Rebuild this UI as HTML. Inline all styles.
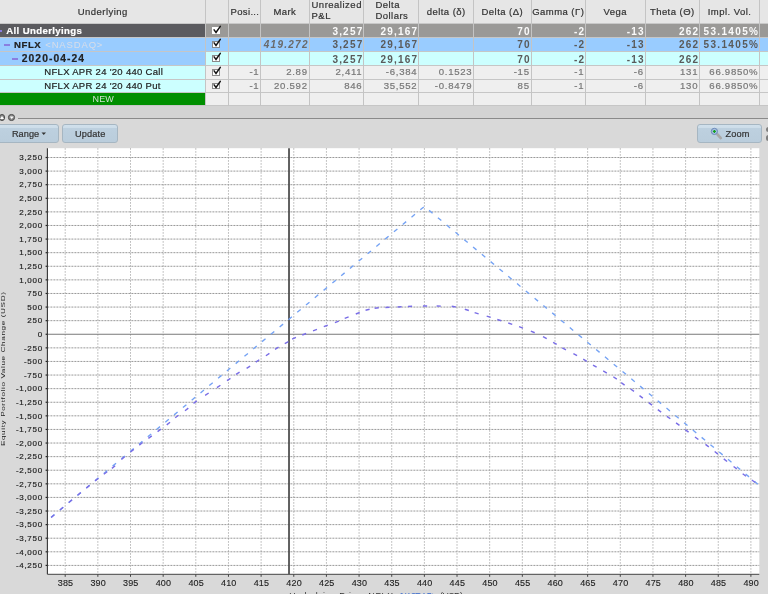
<!DOCTYPE html><html><head><meta charset="utf-8"><style>
*{margin:0;padding:0;box-sizing:border-box}
html,body{width:768px;height:594px;overflow:hidden;background:#d9d9d9;font-family:"Liberation Sans",sans-serif}
.a{position:absolute}
.t{position:absolute;white-space:nowrap;font-size:10px;-webkit-text-stroke:0.2px currentColor}
.b{font-weight:bold;font-size:10.5px}
</style></head><body><div style="position:absolute;left:0;top:0;width:768px;height:594px;will-change:transform"><div class="a" style="left:0;top:0;width:768px;height:23.7px;background:#e6e6e6"></div><div class="a" style="left:0;top:23.7px;width:205.5px;height:13.5px;background:#5b5b5f"></div><div class="a" style="left:205.5px;top:23.7px;width:562.5px;height:13.5px;background:#9a9997"></div><div class="a" style="left:0;top:37.2px;width:205.5px;height:14.1px;background:#99ccff"></div><div class="a" style="left:205.5px;top:37.2px;width:562.5px;height:14.1px;background:#99ccff"></div><div class="a" style="left:0;top:51.3px;width:205.5px;height:13.9px;background:#99ccff"></div><div class="a" style="left:205.5px;top:51.3px;width:562.5px;height:13.9px;background:#ccffff"></div><div class="a" style="left:0;top:65.2px;width:205.5px;height:14.0px;background:#ccffff"></div><div class="a" style="left:205.5px;top:65.2px;width:562.5px;height:14.0px;background:#efefef"></div><div class="a" style="left:0;top:79.2px;width:205.5px;height:13.7px;background:#ccffff"></div><div class="a" style="left:205.5px;top:79.2px;width:562.5px;height:13.7px;background:#efefef"></div><div class="a" style="left:0;top:92.9px;width:205.5px;height:13.0px;background:#008f00"></div><div class="a" style="left:205.5px;top:92.9px;width:562.5px;height:13.0px;background:#efefef"></div><div class="a" style="left:0;top:36.7px;width:768px;height:1px;background:#c6c6c6"></div><div class="a" style="left:0;top:50.8px;width:768px;height:1px;background:#c6c6c6"></div><div class="a" style="left:0;top:64.7px;width:768px;height:1px;background:#c6c6c6"></div><div class="a" style="left:0;top:78.7px;width:768px;height:1px;background:#c6c6c6"></div><div class="a" style="left:0;top:92.4px;width:768px;height:1px;background:#c6c6c6"></div><div class="a" style="left:0;top:105.4px;width:768px;height:1px;background:#c6c6c6"></div><div class="a" style="left:0;top:23.2px;width:768px;height:1px;background:#c8c8c8"></div><div class="a" style="left:205.0px;top:0;width:1px;height:106px;background:#c4c4c4"></div><div class="a" style="left:228.0px;top:0;width:1px;height:106px;background:#c4c4c4"></div><div class="a" style="left:260.2px;top:0;width:1px;height:106px;background:#c4c4c4"></div><div class="a" style="left:308.5px;top:0;width:1px;height:106px;background:#c4c4c4"></div><div class="a" style="left:363.2px;top:0;width:1px;height:106px;background:#c4c4c4"></div><div class="a" style="left:418.1px;top:0;width:1px;height:106px;background:#c4c4c4"></div><div class="a" style="left:473.2px;top:0;width:1px;height:106px;background:#c4c4c4"></div><div class="a" style="left:530.5px;top:0;width:1px;height:106px;background:#c4c4c4"></div><div class="a" style="left:585.0px;top:0;width:1px;height:106px;background:#c4c4c4"></div><div class="a" style="left:644.5px;top:0;width:1px;height:106px;background:#c4c4c4"></div><div class="a" style="left:699.0px;top:0;width:1px;height:106px;background:#c4c4c4"></div><div class="a" style="left:759.1px;top:0;width:1px;height:106px;background:#c4c4c4"></div><div class="t" style="left:0px;top:4.6px;width:205.5px;height:14px;line-height:14px;text-align:center;color:#333;font-size:9.5px;letter-spacing:0.45px">Underlying</div><div class="t" style="left:260.7px;top:4.6px;width:48.30000000000001px;height:14px;line-height:14px;text-align:center;color:#333;font-size:9.5px;letter-spacing:0.45px">Mark</div><div class="t" style="left:418.6px;top:4.6px;width:55.099999999999966px;height:14px;line-height:14px;text-align:center;color:#333;font-size:9.5px;letter-spacing:0.45px">delta (δ)</div><div class="t" style="left:473.7px;top:4.6px;width:57.30000000000001px;height:14px;line-height:14px;text-align:center;color:#333;font-size:9.5px;letter-spacing:0.45px">Delta (Δ)</div><div class="t" style="left:531px;top:4.6px;width:54.5px;height:14px;line-height:14px;text-align:center;color:#333;font-size:9.5px;letter-spacing:0.45px">Gamma (Γ)</div><div class="t" style="left:585.5px;top:4.6px;width:59.5px;height:14px;line-height:14px;text-align:center;color:#333;font-size:9.5px;letter-spacing:0.45px">Vega</div><div class="t" style="left:645px;top:4.6px;width:54.5px;height:14px;line-height:14px;text-align:center;color:#333;font-size:9.5px;letter-spacing:0.45px">Theta (Θ)</div><div class="t" style="left:699.5px;top:4.6px;width:60.10000000000002px;height:14px;line-height:14px;text-align:center;color:#333;font-size:9.5px;letter-spacing:0.45px">Impl. Vol.</div><div class="t" style="left:230.5px;top:4.6px;height:14px;line-height:14px;color:#333;font-size:9.5px;letter-spacing:0.35px">Posi...</div><div class="t" style="left:311.5px;top:-1.5px;line-height:11.5px;color:#333;font-size:9.5px;letter-spacing:0.5px">Unrealized<br>P&amp;L</div><div class="t" style="left:375.5px;top:-1.5px;line-height:11.5px;color:#333;font-size:9.5px;letter-spacing:0.45px">Delta<br>Dollars</div><div class="t" style="left:6.2px;top:23.7px;height:13.5px;line-height:13.5px;color:#fff;font-weight:bold;font-size:9.6px;letter-spacing:0.38px;padding-top:0px">All Underlyings</div><div class="t" style="left:14px;top:37.2px;height:14.1px;line-height:14.1px;color:#222;font-weight:bold;font-size:9.6px;letter-spacing:0.55px;padding-top:1px">NFLX<span style="color:#d8dde8;-webkit-text-stroke:0;font-weight:normal;font-size:9.5px;letter-spacing:0.85px;margin-left:4px">&lt;NASDAQ&gt;</span></div><div class="t" style="left:21.8px;top:51.3px;height:13.9px;line-height:13.9px;color:#222;font-weight:bold;font-size:10.3px;letter-spacing:1.05px;padding-top:0.8px">2020-04-24</div><div class="t" style="left:44.3px;top:65.2px;height:14.0px;line-height:14.0px;color:#222;font-size:9.5px;letter-spacing:0.3px;padding-top:0.3px">NFLX APR 24 '20 440 Call</div><div class="t" style="left:44.3px;top:79.2px;height:13.7px;line-height:13.7px;color:#222;font-size:9.5px;letter-spacing:0.3px;padding-top:0.3px">NFLX APR 24 '20 440 Put</div><div class="t" style="left:0;top:93px;width:205.5px;height:13px;line-height:13px;text-align:center;color:#cfe3cf;-webkit-text-stroke:0;font-size:9px;letter-spacing:0.2px;padding-left:1px">NEW</div><div class="a" style="left:0;top:30.2px;width:2.2px;height:1.6px;background:#8a7ee0"></div><div class="a" style="left:4px;top:43.9px;width:6px;height:1.8px;background:#8a7ee0"></div><div class="a" style="left:12px;top:57.9px;width:6px;height:1.8px;background:#8a7ee0"></div><div class="a" style="left:212.3px;top:27.2px;width:7.3px;height:6.7px;background:#fff;border:none"></div><svg class="a" style="left:205px;top:20.5px" width="20" height="20" viewBox="0 0 20 20"><path d="M9.1 8.9 L11 11.4 L15.3 5.35" stroke="#111" stroke-width="1.5" fill="none" stroke-linecap="round"/></svg><div class="a" style="left:212.3px;top:41.0px;width:7.3px;height:6.7px;background:#fff;border:1px solid #8a8a8a"></div><svg class="a" style="left:205px;top:34.2px" width="20" height="20" viewBox="0 0 20 20"><path d="M9.1 8.9 L11 11.4 L15.3 5.35" stroke="#111" stroke-width="1.5" fill="none" stroke-linecap="round"/></svg><div class="a" style="left:212.3px;top:55.0px;width:7.3px;height:6.7px;background:#fff;border:1px solid #8a8a8a"></div><svg class="a" style="left:205px;top:48.2px" width="20" height="20" viewBox="0 0 20 20"><path d="M9.1 8.9 L11 11.4 L15.3 5.35" stroke="#111" stroke-width="1.5" fill="none" stroke-linecap="round"/></svg><div class="a" style="left:212.3px;top:68.9px;width:7.3px;height:6.7px;background:#fff;border:1px solid #8a8a8a"></div><svg class="a" style="left:205px;top:62.2px" width="20" height="20" viewBox="0 0 20 20"><path d="M9.1 8.9 L11 11.4 L15.3 5.35" stroke="#111" stroke-width="1.5" fill="none" stroke-linecap="round"/></svg><div class="a" style="left:212.3px;top:82.8px;width:7.3px;height:6.7px;background:#fff;border:1px solid #8a8a8a"></div><svg class="a" style="left:205px;top:76.1px" width="20" height="20" viewBox="0 0 20 20"><path d="M9.1 8.9 L11 11.4 L15.3 5.35" stroke="#111" stroke-width="1.5" fill="none" stroke-linecap="round"/></svg><div class="t" style="right:404.6px;top:24.9px;height:13.5px;line-height:13.5px;color:#fafafa;letter-spacing:1.2px;font-weight:bold;font-size:10px;-webkit-text-stroke:0">3,257</div><div class="t" style="right:349.7px;top:24.9px;height:13.5px;line-height:13.5px;color:#fafafa;letter-spacing:1.2px;font-weight:bold;font-size:10px;-webkit-text-stroke:0">29,167</div><div class="t" style="right:237.3px;top:24.9px;height:13.5px;line-height:13.5px;color:#fafafa;letter-spacing:1.2px;font-weight:bold;font-size:10px;-webkit-text-stroke:0">70</div><div class="t" style="right:182.8px;top:24.9px;height:13.5px;line-height:13.5px;color:#fafafa;letter-spacing:1.2px;font-weight:bold;font-size:10px;-webkit-text-stroke:0">-2</div><div class="t" style="right:123.3px;top:24.9px;height:13.5px;line-height:13.5px;color:#fafafa;letter-spacing:1.2px;font-weight:bold;font-size:10px;-webkit-text-stroke:0">-13</div><div class="t" style="right:68.8px;top:24.9px;height:13.5px;line-height:13.5px;color:#fafafa;letter-spacing:1.2px;font-weight:bold;font-size:10px;-webkit-text-stroke:0">262</div><div class="t" style="right:404.6px;top:38.4px;height:14.1px;line-height:14.1px;color:#5a5a5a;letter-spacing:1.2px;font-weight:bold;font-size:10px;-webkit-text-stroke:0">3,257</div><div class="t" style="right:349.7px;top:38.4px;height:14.1px;line-height:14.1px;color:#5a5a5a;letter-spacing:1.2px;font-weight:bold;font-size:10px;-webkit-text-stroke:0">29,167</div><div class="t" style="right:237.3px;top:38.4px;height:14.1px;line-height:14.1px;color:#5a5a5a;letter-spacing:1.2px;font-weight:bold;font-size:10px;-webkit-text-stroke:0">70</div><div class="t" style="right:182.8px;top:38.4px;height:14.1px;line-height:14.1px;color:#5a5a5a;letter-spacing:1.2px;font-weight:bold;font-size:10px;-webkit-text-stroke:0">-2</div><div class="t" style="right:123.3px;top:38.4px;height:14.1px;line-height:14.1px;color:#5a5a5a;letter-spacing:1.2px;font-weight:bold;font-size:10px;-webkit-text-stroke:0">-13</div><div class="t" style="right:68.8px;top:38.4px;height:14.1px;line-height:14.1px;color:#5a5a5a;letter-spacing:1.2px;font-weight:bold;font-size:10px;-webkit-text-stroke:0">262</div><div class="t" style="right:404.6px;top:52.5px;height:13.9px;line-height:13.9px;color:#5a5a5a;letter-spacing:1.2px;font-weight:bold;font-size:10px;-webkit-text-stroke:0">3,257</div><div class="t" style="right:349.7px;top:52.5px;height:13.9px;line-height:13.9px;color:#5a5a5a;letter-spacing:1.2px;font-weight:bold;font-size:10px;-webkit-text-stroke:0">29,167</div><div class="t" style="right:237.3px;top:52.5px;height:13.9px;line-height:13.9px;color:#5a5a5a;letter-spacing:1.2px;font-weight:bold;font-size:10px;-webkit-text-stroke:0">70</div><div class="t" style="right:182.8px;top:52.5px;height:13.9px;line-height:13.9px;color:#5a5a5a;letter-spacing:1.2px;font-weight:bold;font-size:10px;-webkit-text-stroke:0">-2</div><div class="t" style="right:123.3px;top:52.5px;height:13.9px;line-height:13.9px;color:#5a5a5a;letter-spacing:1.2px;font-weight:bold;font-size:10px;-webkit-text-stroke:0">-13</div><div class="t" style="right:68.8px;top:52.5px;height:13.9px;line-height:13.9px;color:#5a5a5a;letter-spacing:1.2px;font-weight:bold;font-size:10px;-webkit-text-stroke:0">262</div><div class="t" style="right:8.7px;top:24.9px;height:13.5px;line-height:13.5px;color:#fafafa;letter-spacing:1.35px;font-weight:bold;font-size:10px;-webkit-text-stroke:0">53.1405%</div><div class="t" style="right:8.7px;top:38.4px;height:14.1px;line-height:14.1px;color:#5a5a5a;letter-spacing:1.35px;font-weight:bold;font-size:10px;-webkit-text-stroke:0">53.1405%</div><div class="t" style="right:459.3px;top:38.4px;height:14.1px;line-height:14.1px;color:#6a6a6a;letter-spacing:1.25px;font-weight:bold;font-size:10px;-webkit-text-stroke:0;font-style:italic">419.272</div><div class="t" style="right:508.6px;top:65.3px;height:14.0px;line-height:14.0px;color:#777;letter-spacing:0.72px;font-size:9.6px">-1</div><div class="t" style="right:460.3px;top:65.3px;height:14.0px;line-height:14.0px;color:#777;letter-spacing:0.72px;font-size:9.6px">2.89</div><div class="t" style="right:405.6px;top:65.3px;height:14.0px;line-height:14.0px;color:#777;letter-spacing:0.72px;font-size:9.6px">2,411</div><div class="t" style="right:350.7px;top:65.3px;height:14.0px;line-height:14.0px;color:#777;letter-spacing:0.72px;font-size:9.6px">-6,384</div><div class="t" style="right:295.6px;top:65.3px;height:14.0px;line-height:14.0px;color:#777;letter-spacing:0.72px;font-size:9.6px">0.1523</div><div class="t" style="right:238.3px;top:65.3px;height:14.0px;line-height:14.0px;color:#777;letter-spacing:0.72px;font-size:9.6px">-15</div><div class="t" style="right:183.8px;top:65.3px;height:14.0px;line-height:14.0px;color:#777;letter-spacing:0.72px;font-size:9.6px">-1</div><div class="t" style="right:124.3px;top:65.3px;height:14.0px;line-height:14.0px;color:#777;letter-spacing:0.72px;font-size:9.6px">-6</div><div class="t" style="right:69.8px;top:65.3px;height:14.0px;line-height:14.0px;color:#777;letter-spacing:0.72px;font-size:9.6px">131</div><div class="t" style="right:9.7px;top:65.3px;height:14.0px;line-height:14.0px;color:#777;letter-spacing:0.72px;font-size:9.6px">66.9850%</div><div class="t" style="right:508.6px;top:79.3px;height:13.7px;line-height:13.7px;color:#777;letter-spacing:0.72px;font-size:9.6px">-1</div><div class="t" style="right:460.3px;top:79.3px;height:13.7px;line-height:13.7px;color:#777;letter-spacing:0.72px;font-size:9.6px">20.592</div><div class="t" style="right:405.6px;top:79.3px;height:13.7px;line-height:13.7px;color:#777;letter-spacing:0.72px;font-size:9.6px">846</div><div class="t" style="right:350.7px;top:79.3px;height:13.7px;line-height:13.7px;color:#777;letter-spacing:0.72px;font-size:9.6px">35,552</div><div class="t" style="right:295.6px;top:79.3px;height:13.7px;line-height:13.7px;color:#777;letter-spacing:0.72px;font-size:9.6px">-0.8479</div><div class="t" style="right:238.3px;top:79.3px;height:13.7px;line-height:13.7px;color:#777;letter-spacing:0.72px;font-size:9.6px">85</div><div class="t" style="right:183.8px;top:79.3px;height:13.7px;line-height:13.7px;color:#777;letter-spacing:0.72px;font-size:9.6px">-1</div><div class="t" style="right:124.3px;top:79.3px;height:13.7px;line-height:13.7px;color:#777;letter-spacing:0.72px;font-size:9.6px">-6</div><div class="t" style="right:69.8px;top:79.3px;height:13.7px;line-height:13.7px;color:#777;letter-spacing:0.72px;font-size:9.6px">130</div><div class="t" style="right:9.7px;top:79.3px;height:13.7px;line-height:13.7px;color:#777;letter-spacing:0.72px;font-size:9.6px">66.9850%</div><div class="a" style="left:0;top:105.9px;width:768px;height:12.3px;background:#d3d3d3"></div><div class="a" style="left:18px;top:117.7px;width:750px;height:1.2px;background:#8a8a8a"></div><div class="a" style="left:-1.3px;top:114.1px;width:6.6px;height:6.6px;border-radius:50%;background:#8a8a8a;border:1.4px solid #4a4a4a"></div><div class="a" style="left:8.4px;top:114.1px;width:6.6px;height:6.6px;border-radius:50%;background:#8a8a8a;border:1.4px solid #4a4a4a"></div><svg class="a" style="left:0;top:112px" width="20" height="12"><path d="M0 119 L2 116 L4 119Z" transform="translate(0,-112)" fill="#fff"/><path d="M9.7 116.5 L11.7 119 L13.7 116.5Z" transform="translate(0,-112)" fill="#fff"/></svg><div class="a" style="left:765.8px;top:126.5px;width:5.5px;height:5.5px;border-radius:50%;background:#7e7e7e"></div><div class="a" style="left:765.8px;top:135.2px;width:5.5px;height:5.5px;border-radius:50%;background:#7e7e7e"></div><div class="a" style="left:-3px;top:123.6px;width:61.5px;height:19.8px;border:1px solid #a6b6c2;border-radius:3px;background:linear-gradient(#d0e0ec 0,#cddde9 2.5px,#bdd0df 3.5px,#bacddc 100%)"></div><div class="a" style="left:61.5px;top:123.6px;width:56.0px;height:19.8px;border:1px solid #a6b6c2;border-radius:3px;background:linear-gradient(#d0e0ec 0,#cddde9 2.5px,#bdd0df 3.5px,#bacddc 100%)"></div><div class="a" style="left:696.6px;top:123.6px;width:65.7px;height:19.8px;border:1px solid #a6b6c2;border-radius:3px;background:linear-gradient(#d0e0ec 0,#cddde9 2.5px,#bdd0df 3.5px,#bacddc 100%)"></div><div class="t" style="left:11.9px;top:127px;height:14px;line-height:14px;color:#333;font-size:9.2px;letter-spacing:0.05px">Range</div><svg class="a" style="left:41px;top:132px" width="6" height="4"><path d="M0.5 0.5 L5 0.5 L2.75 3Z" fill="#333"/></svg><div class="t" style="left:74.9px;top:127px;height:14px;line-height:14px;color:#333;font-size:9.2px;letter-spacing:0.15px">Update</div><div class="t" style="left:725.5px;top:127px;height:14px;line-height:14px;color:#333;font-size:9.2px;letter-spacing:0.15px">Zoom</div><svg class="a" style="left:708px;top:126px" width="16" height="16"><path d="M9.5 8.5 L12.8 12.1" stroke="#a8a8a8" stroke-width="2.6" stroke-linecap="round"/><circle cx="6.4" cy="5.4" r="3.1" fill="#a8c0e0" stroke="#6a88b8" stroke-width="1"/><path d="M6.4 3.9 V6.9 M4.9 5.4 H7.9" stroke="#10a020" stroke-width="1.3"/></svg><svg class="a" style="left:0;top:0" width="768" height="594" viewBox="0 0 768 594" font-family="Liberation Sans, sans-serif"><rect x="47.4" y="148.2" width="711.9" height="426.09999999999997" fill="#fff"/><line x1="65.20" y1="148.2" x2="65.20" y2="574.3" stroke="#b2b2b2" stroke-width="1" stroke-dasharray="1.5 1.5"/><line x1="97.85" y1="148.2" x2="97.85" y2="574.3" stroke="#b2b2b2" stroke-width="1" stroke-dasharray="1.5 1.5"/><line x1="130.50" y1="148.2" x2="130.50" y2="574.3" stroke="#b2b2b2" stroke-width="1" stroke-dasharray="1.5 1.5"/><line x1="163.16" y1="148.2" x2="163.16" y2="574.3" stroke="#b2b2b2" stroke-width="1" stroke-dasharray="1.5 1.5"/><line x1="195.81" y1="148.2" x2="195.81" y2="574.3" stroke="#b2b2b2" stroke-width="1" stroke-dasharray="1.5 1.5"/><line x1="228.46" y1="148.2" x2="228.46" y2="574.3" stroke="#b2b2b2" stroke-width="1" stroke-dasharray="1.5 1.5"/><line x1="261.12" y1="148.2" x2="261.12" y2="574.3" stroke="#b2b2b2" stroke-width="1" stroke-dasharray="1.5 1.5"/><line x1="293.77" y1="148.2" x2="293.77" y2="574.3" stroke="#b2b2b2" stroke-width="1" stroke-dasharray="1.5 1.5"/><line x1="326.42" y1="148.2" x2="326.42" y2="574.3" stroke="#b2b2b2" stroke-width="1" stroke-dasharray="1.5 1.5"/><line x1="359.07" y1="148.2" x2="359.07" y2="574.3" stroke="#b2b2b2" stroke-width="1" stroke-dasharray="1.5 1.5"/><line x1="391.72" y1="148.2" x2="391.72" y2="574.3" stroke="#b2b2b2" stroke-width="1" stroke-dasharray="1.5 1.5"/><line x1="424.38" y1="148.2" x2="424.38" y2="574.3" stroke="#b2b2b2" stroke-width="1" stroke-dasharray="1.5 1.5"/><line x1="457.03" y1="148.2" x2="457.03" y2="574.3" stroke="#b2b2b2" stroke-width="1" stroke-dasharray="1.5 1.5"/><line x1="489.68" y1="148.2" x2="489.68" y2="574.3" stroke="#b2b2b2" stroke-width="1" stroke-dasharray="1.5 1.5"/><line x1="522.34" y1="148.2" x2="522.34" y2="574.3" stroke="#b2b2b2" stroke-width="1" stroke-dasharray="1.5 1.5"/><line x1="554.99" y1="148.2" x2="554.99" y2="574.3" stroke="#b2b2b2" stroke-width="1" stroke-dasharray="1.5 1.5"/><line x1="587.64" y1="148.2" x2="587.64" y2="574.3" stroke="#b2b2b2" stroke-width="1" stroke-dasharray="1.5 1.5"/><line x1="620.29" y1="148.2" x2="620.29" y2="574.3" stroke="#b2b2b2" stroke-width="1" stroke-dasharray="1.5 1.5"/><line x1="652.95" y1="148.2" x2="652.95" y2="574.3" stroke="#b2b2b2" stroke-width="1" stroke-dasharray="1.5 1.5"/><line x1="685.60" y1="148.2" x2="685.60" y2="574.3" stroke="#b2b2b2" stroke-width="1" stroke-dasharray="1.5 1.5"/><line x1="718.25" y1="148.2" x2="718.25" y2="574.3" stroke="#b2b2b2" stroke-width="1" stroke-dasharray="1.5 1.5"/><line x1="750.90" y1="148.2" x2="750.90" y2="574.3" stroke="#b2b2b2" stroke-width="1" stroke-dasharray="1.5 1.5"/><line x1="47.4" y1="157.50" x2="759.3" y2="157.50" stroke="#999999" stroke-width="1" stroke-dasharray="2 1"/><line x1="45.6" y1="157.50" x2="47.4" y2="157.50" stroke="#222" stroke-width="1.2"/><text x="42.8" y="160.25" text-anchor="end" font-size="8" fill="#222" stroke="#222" stroke-width="0.18" letter-spacing="0.7">3,250</text><line x1="47.4" y1="171.10" x2="759.3" y2="171.10" stroke="#999999" stroke-width="1" stroke-dasharray="2 1"/><line x1="45.6" y1="171.10" x2="47.4" y2="171.10" stroke="#222" stroke-width="1.2"/><text x="42.8" y="173.85" text-anchor="end" font-size="8" fill="#222" stroke="#222" stroke-width="0.18" letter-spacing="0.7">3,000</text><line x1="47.4" y1="184.69" x2="759.3" y2="184.69" stroke="#999999" stroke-width="1" stroke-dasharray="2 1"/><line x1="45.6" y1="184.69" x2="47.4" y2="184.69" stroke="#222" stroke-width="1.2"/><text x="42.8" y="187.44" text-anchor="end" font-size="8" fill="#222" stroke="#222" stroke-width="0.18" letter-spacing="0.7">2,750</text><line x1="47.4" y1="198.29" x2="759.3" y2="198.29" stroke="#999999" stroke-width="1" stroke-dasharray="2 1"/><line x1="45.6" y1="198.29" x2="47.4" y2="198.29" stroke="#222" stroke-width="1.2"/><text x="42.8" y="201.04" text-anchor="end" font-size="8" fill="#222" stroke="#222" stroke-width="0.18" letter-spacing="0.7">2,500</text><line x1="47.4" y1="211.89" x2="759.3" y2="211.89" stroke="#999999" stroke-width="1" stroke-dasharray="2 1"/><line x1="45.6" y1="211.89" x2="47.4" y2="211.89" stroke="#222" stroke-width="1.2"/><text x="42.8" y="214.64" text-anchor="end" font-size="8" fill="#222" stroke="#222" stroke-width="0.18" letter-spacing="0.7">2,250</text><line x1="47.4" y1="225.48" x2="759.3" y2="225.48" stroke="#999999" stroke-width="1" stroke-dasharray="2 1"/><line x1="45.6" y1="225.48" x2="47.4" y2="225.48" stroke="#222" stroke-width="1.2"/><text x="42.8" y="228.23" text-anchor="end" font-size="8" fill="#222" stroke="#222" stroke-width="0.18" letter-spacing="0.7">2,000</text><line x1="47.4" y1="239.08" x2="759.3" y2="239.08" stroke="#999999" stroke-width="1" stroke-dasharray="2 1"/><line x1="45.6" y1="239.08" x2="47.4" y2="239.08" stroke="#222" stroke-width="1.2"/><text x="42.8" y="241.83" text-anchor="end" font-size="8" fill="#222" stroke="#222" stroke-width="0.18" letter-spacing="0.7">1,750</text><line x1="47.4" y1="252.68" x2="759.3" y2="252.68" stroke="#999999" stroke-width="1" stroke-dasharray="2 1"/><line x1="45.6" y1="252.68" x2="47.4" y2="252.68" stroke="#222" stroke-width="1.2"/><text x="42.8" y="255.43" text-anchor="end" font-size="8" fill="#222" stroke="#222" stroke-width="0.18" letter-spacing="0.7">1,500</text><line x1="47.4" y1="266.27" x2="759.3" y2="266.27" stroke="#999999" stroke-width="1" stroke-dasharray="2 1"/><line x1="45.6" y1="266.27" x2="47.4" y2="266.27" stroke="#222" stroke-width="1.2"/><text x="42.8" y="269.02" text-anchor="end" font-size="8" fill="#222" stroke="#222" stroke-width="0.18" letter-spacing="0.7">1,250</text><line x1="47.4" y1="279.87" x2="759.3" y2="279.87" stroke="#999999" stroke-width="1" stroke-dasharray="2 1"/><line x1="45.6" y1="279.87" x2="47.4" y2="279.87" stroke="#222" stroke-width="1.2"/><text x="42.8" y="282.62" text-anchor="end" font-size="8" fill="#222" stroke="#222" stroke-width="0.18" letter-spacing="0.7">1,000</text><line x1="47.4" y1="293.47" x2="759.3" y2="293.47" stroke="#999999" stroke-width="1" stroke-dasharray="2 1"/><line x1="45.6" y1="293.47" x2="47.4" y2="293.47" stroke="#222" stroke-width="1.2"/><text x="42.8" y="296.22" text-anchor="end" font-size="8" fill="#222" stroke="#222" stroke-width="0.18" letter-spacing="0.7">750</text><line x1="47.4" y1="307.07" x2="759.3" y2="307.07" stroke="#999999" stroke-width="1" stroke-dasharray="2 1"/><line x1="45.6" y1="307.07" x2="47.4" y2="307.07" stroke="#222" stroke-width="1.2"/><text x="42.8" y="309.82" text-anchor="end" font-size="8" fill="#222" stroke="#222" stroke-width="0.18" letter-spacing="0.7">500</text><line x1="47.4" y1="320.66" x2="759.3" y2="320.66" stroke="#999999" stroke-width="1" stroke-dasharray="2 1"/><line x1="45.6" y1="320.66" x2="47.4" y2="320.66" stroke="#222" stroke-width="1.2"/><text x="42.8" y="323.41" text-anchor="end" font-size="8" fill="#222" stroke="#222" stroke-width="0.18" letter-spacing="0.7">250</text><line x1="47.4" y1="334.26" x2="759.3" y2="334.26" stroke="#7a7a7a" stroke-width="1"/><line x1="45.6" y1="334.26" x2="47.4" y2="334.26" stroke="#222" stroke-width="1.2"/><text x="42.8" y="337.01" text-anchor="end" font-size="8" fill="#222" stroke="#222" stroke-width="0.18" letter-spacing="0.7">0</text><line x1="47.4" y1="347.86" x2="759.3" y2="347.86" stroke="#999999" stroke-width="1" stroke-dasharray="2 1"/><line x1="45.6" y1="347.86" x2="47.4" y2="347.86" stroke="#222" stroke-width="1.2"/><text x="42.8" y="350.61" text-anchor="end" font-size="8" fill="#222" stroke="#222" stroke-width="0.18" letter-spacing="0.7">-250</text><line x1="47.4" y1="361.45" x2="759.3" y2="361.45" stroke="#999999" stroke-width="1" stroke-dasharray="2 1"/><line x1="45.6" y1="361.45" x2="47.4" y2="361.45" stroke="#222" stroke-width="1.2"/><text x="42.8" y="364.20" text-anchor="end" font-size="8" fill="#222" stroke="#222" stroke-width="0.18" letter-spacing="0.7">-500</text><line x1="47.4" y1="375.05" x2="759.3" y2="375.05" stroke="#999999" stroke-width="1" stroke-dasharray="2 1"/><line x1="45.6" y1="375.05" x2="47.4" y2="375.05" stroke="#222" stroke-width="1.2"/><text x="42.8" y="377.80" text-anchor="end" font-size="8" fill="#222" stroke="#222" stroke-width="0.18" letter-spacing="0.7">-750</text><line x1="47.4" y1="388.65" x2="759.3" y2="388.65" stroke="#999999" stroke-width="1" stroke-dasharray="2 1"/><line x1="45.6" y1="388.65" x2="47.4" y2="388.65" stroke="#222" stroke-width="1.2"/><text x="42.8" y="391.40" text-anchor="end" font-size="8" fill="#222" stroke="#222" stroke-width="0.18" letter-spacing="0.7">-1,000</text><line x1="47.4" y1="402.25" x2="759.3" y2="402.25" stroke="#999999" stroke-width="1" stroke-dasharray="2 1"/><line x1="45.6" y1="402.25" x2="47.4" y2="402.25" stroke="#222" stroke-width="1.2"/><text x="42.8" y="405.00" text-anchor="end" font-size="8" fill="#222" stroke="#222" stroke-width="0.18" letter-spacing="0.7">-1,250</text><line x1="47.4" y1="415.84" x2="759.3" y2="415.84" stroke="#999999" stroke-width="1" stroke-dasharray="2 1"/><line x1="45.6" y1="415.84" x2="47.4" y2="415.84" stroke="#222" stroke-width="1.2"/><text x="42.8" y="418.59" text-anchor="end" font-size="8" fill="#222" stroke="#222" stroke-width="0.18" letter-spacing="0.7">-1,500</text><line x1="47.4" y1="429.44" x2="759.3" y2="429.44" stroke="#999999" stroke-width="1" stroke-dasharray="2 1"/><line x1="45.6" y1="429.44" x2="47.4" y2="429.44" stroke="#222" stroke-width="1.2"/><text x="42.8" y="432.19" text-anchor="end" font-size="8" fill="#222" stroke="#222" stroke-width="0.18" letter-spacing="0.7">-1,750</text><line x1="47.4" y1="443.04" x2="759.3" y2="443.04" stroke="#999999" stroke-width="1" stroke-dasharray="2 1"/><line x1="45.6" y1="443.04" x2="47.4" y2="443.04" stroke="#222" stroke-width="1.2"/><text x="42.8" y="445.79" text-anchor="end" font-size="8" fill="#222" stroke="#222" stroke-width="0.18" letter-spacing="0.7">-2,000</text><line x1="47.4" y1="456.63" x2="759.3" y2="456.63" stroke="#999999" stroke-width="1" stroke-dasharray="2 1"/><line x1="45.6" y1="456.63" x2="47.4" y2="456.63" stroke="#222" stroke-width="1.2"/><text x="42.8" y="459.38" text-anchor="end" font-size="8" fill="#222" stroke="#222" stroke-width="0.18" letter-spacing="0.7">-2,250</text><line x1="47.4" y1="470.23" x2="759.3" y2="470.23" stroke="#999999" stroke-width="1" stroke-dasharray="2 1"/><line x1="45.6" y1="470.23" x2="47.4" y2="470.23" stroke="#222" stroke-width="1.2"/><text x="42.8" y="472.98" text-anchor="end" font-size="8" fill="#222" stroke="#222" stroke-width="0.18" letter-spacing="0.7">-2,500</text><line x1="47.4" y1="483.83" x2="759.3" y2="483.83" stroke="#999999" stroke-width="1" stroke-dasharray="2 1"/><line x1="45.6" y1="483.83" x2="47.4" y2="483.83" stroke="#222" stroke-width="1.2"/><text x="42.8" y="486.58" text-anchor="end" font-size="8" fill="#222" stroke="#222" stroke-width="0.18" letter-spacing="0.7">-2,750</text><line x1="47.4" y1="497.42" x2="759.3" y2="497.42" stroke="#999999" stroke-width="1" stroke-dasharray="2 1"/><line x1="45.6" y1="497.42" x2="47.4" y2="497.42" stroke="#222" stroke-width="1.2"/><text x="42.8" y="500.17" text-anchor="end" font-size="8" fill="#222" stroke="#222" stroke-width="0.18" letter-spacing="0.7">-3,000</text><line x1="47.4" y1="511.02" x2="759.3" y2="511.02" stroke="#999999" stroke-width="1" stroke-dasharray="2 1"/><line x1="45.6" y1="511.02" x2="47.4" y2="511.02" stroke="#222" stroke-width="1.2"/><text x="42.8" y="513.77" text-anchor="end" font-size="8" fill="#222" stroke="#222" stroke-width="0.18" letter-spacing="0.7">-3,250</text><line x1="47.4" y1="524.62" x2="759.3" y2="524.62" stroke="#999999" stroke-width="1" stroke-dasharray="2 1"/><line x1="45.6" y1="524.62" x2="47.4" y2="524.62" stroke="#222" stroke-width="1.2"/><text x="42.8" y="527.37" text-anchor="end" font-size="8" fill="#222" stroke="#222" stroke-width="0.18" letter-spacing="0.7">-3,500</text><line x1="47.4" y1="538.21" x2="759.3" y2="538.21" stroke="#999999" stroke-width="1" stroke-dasharray="2 1"/><line x1="45.6" y1="538.21" x2="47.4" y2="538.21" stroke="#222" stroke-width="1.2"/><text x="42.8" y="540.96" text-anchor="end" font-size="8" fill="#222" stroke="#222" stroke-width="0.18" letter-spacing="0.7">-3,750</text><line x1="47.4" y1="551.81" x2="759.3" y2="551.81" stroke="#999999" stroke-width="1" stroke-dasharray="2 1"/><line x1="45.6" y1="551.81" x2="47.4" y2="551.81" stroke="#222" stroke-width="1.2"/><text x="42.8" y="554.56" text-anchor="end" font-size="8" fill="#222" stroke="#222" stroke-width="0.18" letter-spacing="0.7">-4,000</text><line x1="47.4" y1="565.41" x2="759.3" y2="565.41" stroke="#999999" stroke-width="1" stroke-dasharray="2 1"/><line x1="45.6" y1="565.41" x2="47.4" y2="565.41" stroke="#222" stroke-width="1.2"/><text x="42.8" y="568.16" text-anchor="end" font-size="8" fill="#222" stroke="#222" stroke-width="0.18" letter-spacing="0.7">-4,250</text><line x1="65.20" y1="574.3" x2="65.20" y2="576.8" stroke="#444" stroke-width="1"/><text x="65.50" y="586.3" text-anchor="middle" font-size="9" fill="#222" stroke="#222" stroke-width="0.12" letter-spacing="0.15">385</text><line x1="97.85" y1="574.3" x2="97.85" y2="576.8" stroke="#444" stroke-width="1"/><text x="98.15" y="586.3" text-anchor="middle" font-size="9" fill="#222" stroke="#222" stroke-width="0.12" letter-spacing="0.15">390</text><line x1="130.50" y1="574.3" x2="130.50" y2="576.8" stroke="#444" stroke-width="1"/><text x="130.81" y="586.3" text-anchor="middle" font-size="9" fill="#222" stroke="#222" stroke-width="0.12" letter-spacing="0.15">395</text><line x1="163.16" y1="574.3" x2="163.16" y2="576.8" stroke="#444" stroke-width="1"/><text x="163.46" y="586.3" text-anchor="middle" font-size="9" fill="#222" stroke="#222" stroke-width="0.12" letter-spacing="0.15">400</text><line x1="195.81" y1="574.3" x2="195.81" y2="576.8" stroke="#444" stroke-width="1"/><text x="196.11" y="586.3" text-anchor="middle" font-size="9" fill="#222" stroke="#222" stroke-width="0.12" letter-spacing="0.15">405</text><line x1="228.46" y1="574.3" x2="228.46" y2="576.8" stroke="#444" stroke-width="1"/><text x="228.76" y="586.3" text-anchor="middle" font-size="9" fill="#222" stroke="#222" stroke-width="0.12" letter-spacing="0.15">410</text><line x1="261.12" y1="574.3" x2="261.12" y2="576.8" stroke="#444" stroke-width="1"/><text x="261.42" y="586.3" text-anchor="middle" font-size="9" fill="#222" stroke="#222" stroke-width="0.12" letter-spacing="0.15">415</text><line x1="293.77" y1="574.3" x2="293.77" y2="576.8" stroke="#444" stroke-width="1"/><text x="294.07" y="586.3" text-anchor="middle" font-size="9" fill="#222" stroke="#222" stroke-width="0.12" letter-spacing="0.15">420</text><line x1="326.42" y1="574.3" x2="326.42" y2="576.8" stroke="#444" stroke-width="1"/><text x="326.72" y="586.3" text-anchor="middle" font-size="9" fill="#222" stroke="#222" stroke-width="0.12" letter-spacing="0.15">425</text><line x1="359.07" y1="574.3" x2="359.07" y2="576.8" stroke="#444" stroke-width="1"/><text x="359.37" y="586.3" text-anchor="middle" font-size="9" fill="#222" stroke="#222" stroke-width="0.12" letter-spacing="0.15">430</text><line x1="391.72" y1="574.3" x2="391.72" y2="576.8" stroke="#444" stroke-width="1"/><text x="392.02" y="586.3" text-anchor="middle" font-size="9" fill="#222" stroke="#222" stroke-width="0.12" letter-spacing="0.15">435</text><line x1="424.38" y1="574.3" x2="424.38" y2="576.8" stroke="#444" stroke-width="1"/><text x="424.68" y="586.3" text-anchor="middle" font-size="9" fill="#222" stroke="#222" stroke-width="0.12" letter-spacing="0.15">440</text><line x1="457.03" y1="574.3" x2="457.03" y2="576.8" stroke="#444" stroke-width="1"/><text x="457.33" y="586.3" text-anchor="middle" font-size="9" fill="#222" stroke="#222" stroke-width="0.12" letter-spacing="0.15">445</text><line x1="489.68" y1="574.3" x2="489.68" y2="576.8" stroke="#444" stroke-width="1"/><text x="489.98" y="586.3" text-anchor="middle" font-size="9" fill="#222" stroke="#222" stroke-width="0.12" letter-spacing="0.15">450</text><line x1="522.34" y1="574.3" x2="522.34" y2="576.8" stroke="#444" stroke-width="1"/><text x="522.63" y="586.3" text-anchor="middle" font-size="9" fill="#222" stroke="#222" stroke-width="0.12" letter-spacing="0.15">455</text><line x1="554.99" y1="574.3" x2="554.99" y2="576.8" stroke="#444" stroke-width="1"/><text x="555.29" y="586.3" text-anchor="middle" font-size="9" fill="#222" stroke="#222" stroke-width="0.12" letter-spacing="0.15">460</text><line x1="587.64" y1="574.3" x2="587.64" y2="576.8" stroke="#444" stroke-width="1"/><text x="587.94" y="586.3" text-anchor="middle" font-size="9" fill="#222" stroke="#222" stroke-width="0.12" letter-spacing="0.15">465</text><line x1="620.29" y1="574.3" x2="620.29" y2="576.8" stroke="#444" stroke-width="1"/><text x="620.59" y="586.3" text-anchor="middle" font-size="9" fill="#222" stroke="#222" stroke-width="0.12" letter-spacing="0.15">470</text><line x1="652.95" y1="574.3" x2="652.95" y2="576.8" stroke="#444" stroke-width="1"/><text x="653.25" y="586.3" text-anchor="middle" font-size="9" fill="#222" stroke="#222" stroke-width="0.12" letter-spacing="0.15">475</text><line x1="685.60" y1="574.3" x2="685.60" y2="576.8" stroke="#444" stroke-width="1"/><text x="685.90" y="586.3" text-anchor="middle" font-size="9" fill="#222" stroke="#222" stroke-width="0.12" letter-spacing="0.15">480</text><line x1="718.25" y1="574.3" x2="718.25" y2="576.8" stroke="#444" stroke-width="1"/><text x="718.55" y="586.3" text-anchor="middle" font-size="9" fill="#222" stroke="#222" stroke-width="0.12" letter-spacing="0.15">485</text><line x1="750.90" y1="574.3" x2="750.90" y2="576.8" stroke="#444" stroke-width="1"/><text x="751.20" y="586.3" text-anchor="middle" font-size="9" fill="#222" stroke="#222" stroke-width="0.12" letter-spacing="0.15">490</text><line x1="47.4" y1="148.2" x2="47.4" y2="574.3" stroke="#333" stroke-width="1.1"/><line x1="47.4" y1="574.3" x2="759.3" y2="574.3" stroke="#444" stroke-width="1"/><line x1="289.01" y1="148.2" x2="289.01" y2="574.3" stroke="#505050" stroke-width="1.8"/><path d="M50.05 518.20 L424.38 206.45 L759.52 485.57" stroke="#74a2f4" stroke-width="1.35" fill="none" stroke-dasharray="4.5 6.9417" stroke-dashoffset="10.15"/><path d="M51.18 517.55L54.36 514.80M59.97 509.94L63.15 507.19M68.73 502.51L71.97 499.85M77.52 495.28L80.76 492.61M86.31 488.07L89.56 485.41M95.10 480.87L98.35 478.21M103.83 474.21L107.21 471.72M111.92 468.41L115.14 465.71M121.42 459.58L124.57 456.81M130.50 451.98L133.78 449.35M139.27 445.06L142.63 442.54M148.40 438.43L151.79 435.95M157.56 431.65L160.92 429.14M166.73 424.87L170.03 422.26M175.21 417.78L178.53 415.21M185.02 410.73L188.31 408.12M193.49 403.40L196.82 400.84M205.17 395.32L208.66 392.99M216.92 387.59L220.41 385.25M226.99 380.68L230.46 378.31M236.02 374.43L239.58 372.19M246.61 368.37L250.15 366.12M255.77 362.05L259.28 359.74M265.89 355.75L269.40 353.45M275.01 349.44L278.56 347.20M284.77 343.70L288.39 341.57M292.14 339.13L295.91 337.28M302.26 334.99L306.17 333.48M313.03 330.85L316.95 329.35M323.80 326.69L327.73 325.21M334.92 322.64L338.82 321.08M344.72 318.43L348.61 316.83M355.80 313.99L359.73 312.51M365.54 310.30L369.59 309.19M374.62 308.27L378.79 307.74M385.38 307.42L389.58 307.20M397.46 306.91L401.66 306.74M407.91 306.45L412.11 306.32M422.93 306.05L427.13 306.05M436.64 306.09L440.84 306.10M451.71 306.25L455.82 307.07M464.81 309.25L468.84 310.46M474.62 312.58L478.62 313.84M486.70 316.09L490.71 317.32M497.28 319.51L501.28 320.81M508.26 323.03L512.25 324.36M519.06 326.69L523.00 328.13M530.85 331.14L534.71 332.79M543.00 336.66L546.73 338.60M553.11 342.32L556.73 344.45M562.30 347.92L565.97 349.97M573.39 353.60L577.08 355.61M583.22 359.23L586.84 361.36M593.01 365.07L596.63 367.20M603.20 370.99L606.83 373.10M613.33 376.76L616.81 379.11M621.20 382.69L624.61 385.14M630.60 388.98L634.02 391.41M639.52 395.59L642.86 398.13M648.67 402.59L652.00 405.14M657.79 409.59L661.16 412.11M666.92 416.31L670.32 418.77M676.06 422.84L679.46 425.32M685.22 429.64L688.59 432.15M695.00 437.00L698.40 439.47M705.47 444.40L708.83 446.92M714.65 451.52L717.94 454.13M723.78 458.85L727.08 461.45M733.58 466.45L736.88 469.04M742.68 473.71L746.06 476.21M751.86 479.96L755.17 482.55" stroke="#7a6ee6" stroke-width="1.45" fill="none"/><text transform="translate(4.6,369.1) rotate(-90) scale(1,0.7)" x="-77" y="0" font-size="8.2" fill="#222" textLength="154" lengthAdjust="spacing">Equity Portfolio Value Change (USD)</text><text x="289.3" y="599.1" font-size="8.8" fill="#333" textLength="75" lengthAdjust="spacing">Underlying Price:</text><text x="368.2" y="599.1" font-size="8.8" fill="#333" textLength="25" lengthAdjust="spacing">NFLX</text><text x="396.3" y="599.1" font-size="8.8" fill="#3366cc" textLength="40.5" lengthAdjust="spacing">&lt;NASDAQ&gt;</text><text x="440" y="599.1" font-size="8.8" fill="#333" textLength="23" lengthAdjust="spacing">(USD)</text></svg></div></body></html>
